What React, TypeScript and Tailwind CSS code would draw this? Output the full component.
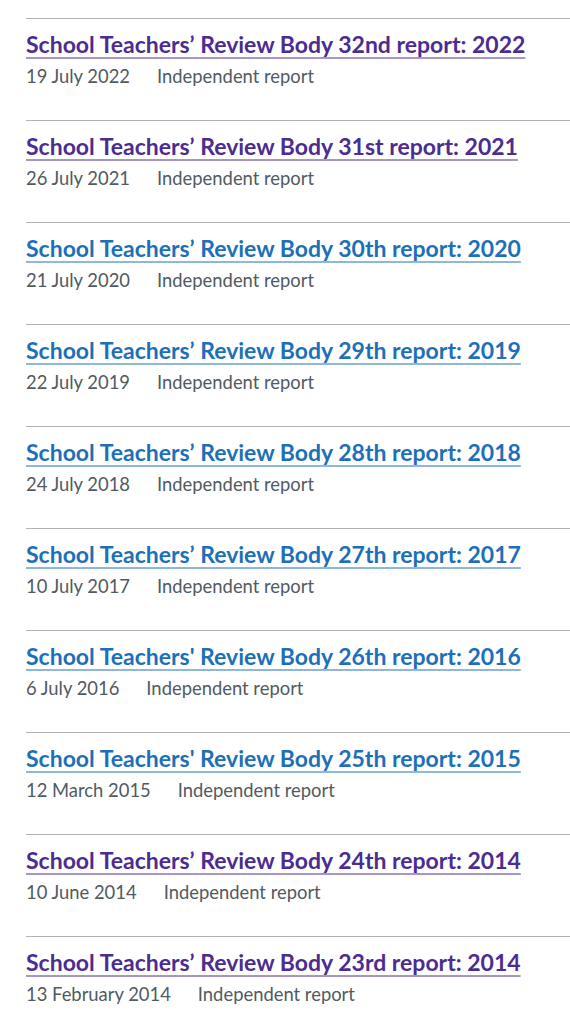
const reports = [
  { title: "School Teachers’ Review Body 32nd report: 2022", date: "19 July 2022", visited: true },
  { title: "School Teachers’ Review Body 31st report: 2021", date: "26 July 2021", visited: true },
  { title: "School Teachers’ Review Body 30th report: 2020", date: "21 July 2020", visited: false },
  { title: "School Teachers’ Review Body 29th report: 2019", date: "22 July 2019", visited: false },
  { title: "School Teachers’ Review Body 28th report: 2018", date: "24 July 2018", visited: false },
  { title: "School Teachers’ Review Body 27th report: 2017", date: "10 July 2017", visited: false },
  { title: "School Teachers' Review Body 26th report: 2016", date: "6 July 2016", visited: false },
  { title: "School Teachers' Review Body 25th report: 2015", date: "12 March 2015", visited: false },
  { title: "School Teachers’ Review Body 24th report: 2014", date: "10 June 2014", visited: true },
  { title: "School Teachers’ Review Body 23rd report: 2014", date: "13 February 2014", visited: true },
]

export default function App() {
  return (
    <main className="min-h-screen bg-white font-['Lato',sans-serif]">
      <ul className="pt-[18px] pl-[26px]">
        {reports.map((r) => (
          <li key={r.title} className="h-[102px] border-t border-[#b1b4b6] pt-[11px]">
            <a
              href="#"
              className={
                r.visited
                  ? "block text-[23px] leading-[28px] font-bold text-[#4c2c92] underline decoration-[2px] underline-offset-[4px] decoration-[#4c2c92]/50"
                  : "block text-[23px] leading-[28px] font-bold text-[#1d70b8] underline decoration-[2px] underline-offset-[4px] decoration-[#1d70b8]/50"
              }
            >
              <span>{r.title}</span>
            </a>
            <p className="mt-[6px] flex text-[18.4px] leading-[24px] text-[#505a5f]">
              <span className="mr-[27px]">{r.date}</span>
              <span>Independent report</span>
            </p>
          </li>
        ))}
      </ul>
    </main>
  )
}
